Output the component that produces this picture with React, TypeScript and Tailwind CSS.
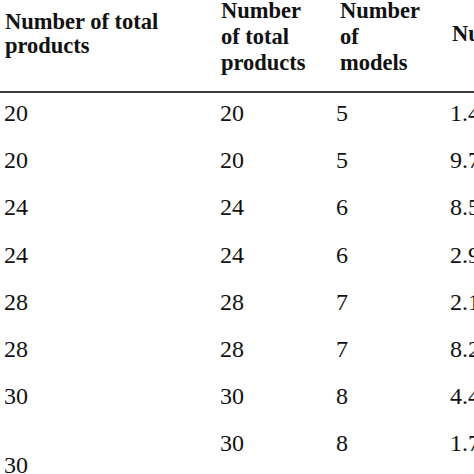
const rows = [
  ["20", "20", "5", "1.42"],
  ["20", "20", "5", "9.75"],
  ["24", "24", "6", "8.53"],
  ["24", "24", "6", "2.96"],
  ["28", "28", "7", "2.14"],
  ["28", "28", "7", "8.21"],
  ["30", "30", "8", "4.45"],
  ["30", "30", "8", "1.73"],
];

export default function App() {
  return (
    <div className="w-[474px] h-[474px] overflow-hidden bg-white text-[#111] font-['Liberation_Serif','Times_New_Roman',serif]">
      {/* header */}
      <div className="flex h-[91px] pl-[5px] text-[22.5px] font-bold whitespace-nowrap">
        <div className="w-[216px] shrink-0 pt-[10px] leading-[24px]">
          Number of total
          <br />
          products
        </div>
        <div className="w-[119px] shrink-0 mt-[-2px] leading-[26px]">
          Number
          <br />
          of total
          <br />
          products
        </div>
        <div className="w-[112px] shrink-0 mt-[-2px] leading-[26px]">
          Number
          <br />
          of
          <br />
          models
        </div>
        <div className="shrink-0 pt-[22px] leading-[24px]">Number of models</div>
      </div>
      <div className="h-[2px] bg-[#3a3a3a]" />

      {/* body */}
      <div className="pt-[2px] text-[24px] whitespace-nowrap">
        {rows.map((r, i) => (
          <div key={i} className="flex h-[47.2px] pl-[4px] items-start">
            <div className={i === rows.length - 1 ? "w-[216px] shrink-0 pt-[22px]" : "w-[216px] shrink-0"}>
              {r[0]}
            </div>
            <div className="w-[116px] shrink-0">{r[1]}</div>
            <div className="w-[114px] shrink-0">{r[2]}</div>
            <div className="shrink-0">{r[3]}</div>
          </div>
        ))}
      </div>
    </div>
  );
}
